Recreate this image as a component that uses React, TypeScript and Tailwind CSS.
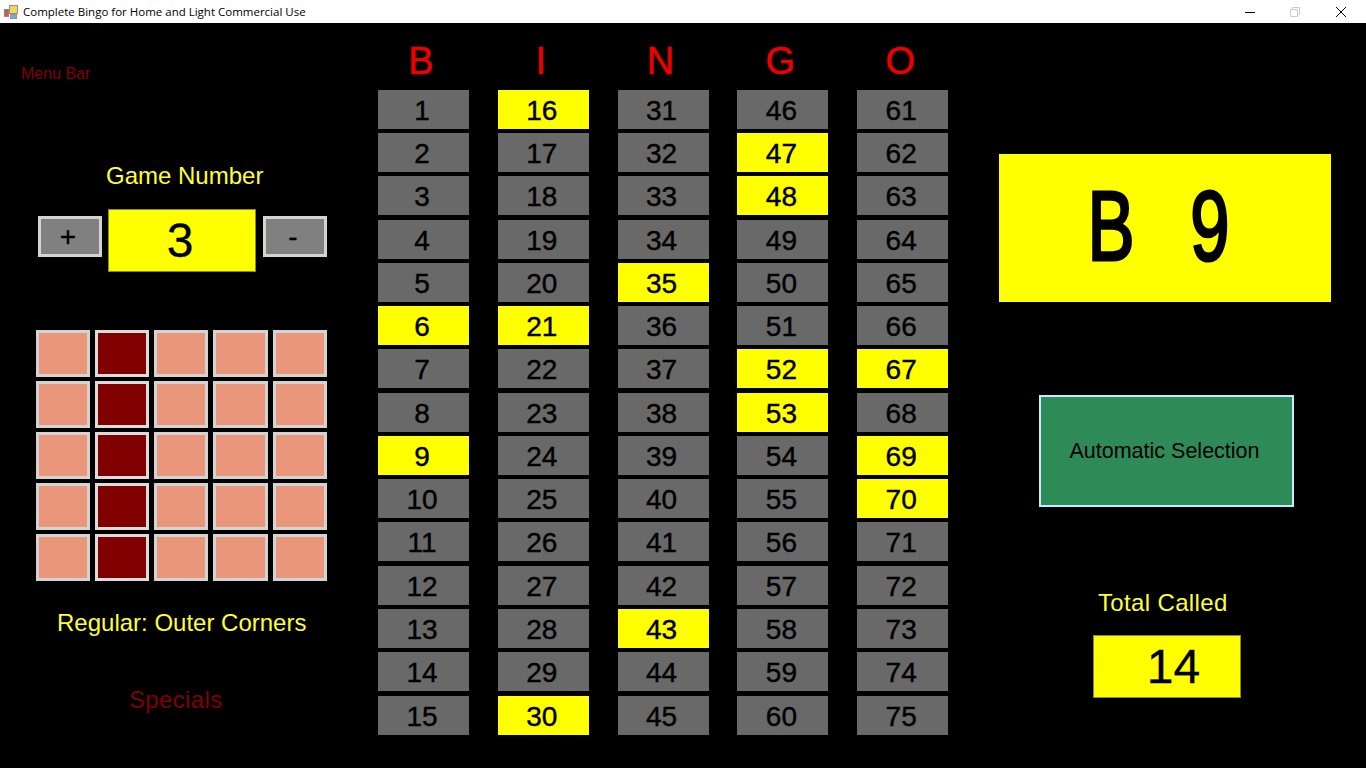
const sans = "font-['Liberation_Sans',Arial,sans-serif]";

const columns = [
  { letter: 'B', start: 1 },
  { letter: 'I', start: 16 },
  { letter: 'N', start: 31 },
  { letter: 'G', start: 46 },
  { letter: 'O', start: 61 },
];
const called = [6, 9, 16, 21, 30, 35, 43, 47, 48, 52, 53, 67, 69, 70];

function AppIcon() {
  return (
    <svg width="16" height="16" viewBox="0 0 16 16" aria-hidden>
      <rect x="6.5" y="1.5" width="8" height="8" fill="#f4d35e" stroke="#9a9078" />
      <rect x="1.5" y="5.5" width="4" height="7" fill="#d9534f" stroke="#8a8a8a" />
      <rect x="7.5" y="10.5" width="6" height="4" fill="#7fa6dc" stroke="#8a93a6" />
    </svg>
  );
}

function TitleBar() {
  return (
    <div className="flex h-[23px] items-center bg-white pl-[3px]">
      <AppIcon />
      <span className="ml-1 font-['Open_Sans',sans-serif] text-[11.5px] text-black">
        Complete Bingo for Home and Light Commercial Use
      </span>
      <div className="ml-auto flex items-center">
        <svg width="12" height="12" viewBox="0 0 12 12" className="mr-[33px]" aria-hidden>
          <path d="M1 6.5h10" stroke="#000" />
        </svg>
        <svg width="12" height="12" viewBox="0 0 12 12" className="mr-[34px]" aria-hidden>
          <path d="M1.5 3.5h7v7h-7zM3.5 3V1.5h7v7H9" fill="none" stroke="#ccc" />
        </svg>
        <svg width="12" height="12" viewBox="0 0 12 12" className="mr-[19px]" aria-hidden>
          <path d="M1 1l10 10M11 1L1 11" stroke="#000" />
        </svg>
      </div>
    </div>
  );
}

function SquareButton({ label }: { label: string }) {
  return (
    <button className="mt-[7px] h-[41px] w-[64px] border-[3px] border-[#d3d3d3] bg-[#808080] pr-[4px] text-[28px] leading-none text-black [-webkit-text-stroke:0.3px_#000]">
      {label}
    </button>
  );
}

function LeftPanel() {
  return (
    <div className="flex w-[378px] shrink-0 flex-col">
      <div className="ml-[21px] mt-[40px] text-[16px] leading-[22px] text-[#800000]">Menu Bar</div>
      <div className="ml-[106px] mt-[77px] text-[24px] leading-[28px] text-[#ffff33]">Game Number</div>
      <div className="ml-[38px] mt-[19px] flex w-[289px] items-start">
        <SquareButton label="+" />
        <div className="ml-[6px] mr-[7px] flex h-[63px] w-[148px] items-center justify-center border border-[#8a8a20] bg-[#ffff00] pr-[4px] text-[48px] text-black [-webkit-text-stroke:0.3px_#000]">
          3
        </div>
        <SquareButton label="-" />
      </div>
      <div className="ml-[36px] mt-[58px] grid w-[290.8px] grid-cols-5 gap-x-[5px] gap-y-[4px]">
        {Array.from({ length: 25 }, (_, i) => (
          <div
            key={i}
            className={
              i % 5 === 1
                ? 'h-[47px] border-[3px] border-[#dcdcdc] bg-[#800000]'
                : 'h-[47px] border-[3px] border-[#d3d3d3] bg-[#e9967a]'
            }
          />
        ))}
      </div>
      <div className="ml-[57px] mt-[28px] text-[24px] leading-[28px] text-[#ffff33]">Regular: Outer Corners</div>
      <div className="ml-[129px] mt-[49px] text-[24px] leading-[28px] tracking-[0.35px] text-[#800000]">Specials</div>
    </div>
  );
}

function NumberBoard() {
  return (
    <div className="flex w-[571px] shrink-0 gap-x-[28.8px]">
      {columns.map((col) => (
        <div key={col.letter} className="flex w-[91px] shrink-0 flex-col">
          <div className="mt-[14px] h-[52.8px] pr-[5px] text-center text-[38px] leading-[48px] text-[#ee0000] [-webkit-text-stroke:0.5px_#ee0000]">
            {col.letter}
          </div>
          <div className="flex flex-col gap-y-[4.28px]">
            {Array.from({ length: 15 }, (_, i) => {
              const n = col.start + i;
              return (
                <div
                  key={n}
                  className={
                    called.includes(n)
                      ? 'flex h-[39px] items-center justify-center bg-[#ffff00] pr-[3px] pt-[3px] text-[28px] text-black [-webkit-text-stroke:0.4px_#000]'
                      : 'flex h-[39px] items-center justify-center bg-[#696969] pr-[3px] pt-[3px] text-[28px] text-black [-webkit-text-stroke:0.4px_#000]'
                  }
                >
                  {n}
                </div>
              );
            })}
          </div>
        </div>
      ))}
    </div>
  );
}

function RightPanel() {
  return (
    <div className="ml-[50px] flex w-[332px] shrink-0 flex-col">
      <div className="mt-[131px] flex h-[148px] w-[332px] items-center justify-center bg-[#ffff00] pb-[5px] pr-[12px] text-black">
        <span className="inline-block scale-x-[0.72] text-[98px] leading-none [-webkit-text-stroke:3px_#000] [word-spacing:50px]">
          B 9
        </span>
      </div>
      <button className="ml-[40px] mt-[93px] h-[112px] w-[255px] border-2 border-[#bfefff] bg-[#2e8b57] pr-[4px] text-[21.5px] text-black">
        Automatic Selection
      </button>
      <div className="ml-[99px] mt-[82px] text-[24px] leading-[28px] tracking-[0.35px] text-[#ffff33]">Total Called</div>
      <div className="ml-[94px] mt-[18px] flex h-[63px] w-[148px] items-center justify-center border border-[#8a8a20] bg-[#ffff00] pl-[13px] text-[48px] text-black [-webkit-text-stroke:0.3px_#000]">
        14
      </div>
    </div>
  );
}

export default function App() {
  return (
    <div className={`h-[768px] w-[1366px] overflow-hidden bg-black ${sans}`}>
      <TitleBar />
      <div className="flex">
        <LeftPanel />
        <NumberBoard />
        <RightPanel />
      </div>
    </div>
  );
}
